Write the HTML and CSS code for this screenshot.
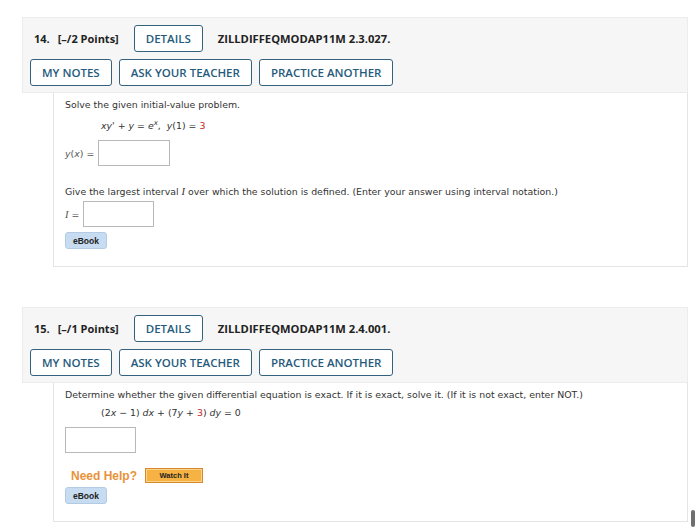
FILE: index.html
```html
<!DOCTYPE html>
<html lang="en">
<head>
    <meta charset="UTF-8">
    <title>Assignment Questions</title>
    <link rel="stylesheet" href="styles.css">
</head>
<body>
    <div class="page">
        <!-- Question 14 -->
        <div class="question">
            <div class="q-header">
                <div class="q-title">
                    <span class="q-num">14.</span>
                    <span class="q-points">[&ndash;/2 Points]</span>
                    <button class="btn">DETAILS</button>
                    <span class="q-code">ZILLDIFFEQMODAP11M 2.3.027.</span>
                </div>
                <div class="q-actions">
                    <button class="btn">MY NOTES</button>
                    <button class="btn">ASK YOUR TEACHER</button>
                    <button class="btn">PRACTICE ANOTHER</button>
                </div>
            </div>
            <div class="q-body q-body-14">
                <p class="text">Solve the given initial-value problem.</p>
                <p class="eq"><i>xy</i>' + <i>y</i> = <i>e</i><sup><i>x</i></sup>,&nbsp; <i>y</i>(1) = <span class="red">3</span></p>
                <div class="answer-row">
                    <span class="label"><i>y</i>(<i>x</i>) =</span>
                    <span class="answer-box"></span>
                </div>
                <p class="text text-gap">Give the largest interval <i class="serif">I</i> over which the solution is defined. (Enter your answer using interval notation.)</p>
                <div class="answer-row answer-row-small">
                    <span class="label"><i class="serif">I</i> =</span>
                    <span class="answer-box"></span>
                </div>
                <button class="ebook">eBook</button>
            </div>
        </div>

        <!-- Question 15 -->
        <div class="question">
            <div class="q-header">
                <div class="q-title">
                    <span class="q-num">15.</span>
                    <span class="q-points">[&ndash;/1 Points]</span>
                    <button class="btn">DETAILS</button>
                    <span class="q-code">ZILLDIFFEQMODAP11M 2.4.001.</span>
                </div>
                <div class="q-actions">
                    <button class="btn">MY NOTES</button>
                    <button class="btn">ASK YOUR TEACHER</button>
                    <button class="btn">PRACTICE ANOTHER</button>
                </div>
            </div>
            <div class="q-body q-body-15">
                <p class="text">Determine whether the given differential equation is exact. If it is exact, solve it. (If it is not exact, enter NOT.)</p>
                <p class="eq eq-15">(2<i>x</i> &minus; 1) <i>dx</i> + (7<i>y</i> + <span class="red">3</span>) <i>dy</i> = 0</p>
                <span class="answer-box answer-wide"></span>
                <div class="help">
                    <span class="help-label">Need Help?</span>
                    <button class="watch">Watch It</button>
                </div>
                <button class="ebook">eBook</button>
            </div>
        </div>
    </div>
    <div class="scroll-thumb"></div>
</body>
</html>
```

FILE: styles.css
```css
/* General Styles */
body {
    margin: 0;
    padding: 0;
    background-color: #ffffff;
    font-family: "Open Sans", Arial, sans-serif;
    color: #333333;
}

.page {
    padding: 17px 12px 0 22px;
    display: flex;
    flex-direction: column;
    gap: 40px;
}

/* Header panel */
.q-header {
    width: 666px;
    box-sizing: border-box;
    background-color: #f6f6f6;
    border: 1px solid #ececec;
    padding: 7px 7px 6px 7px;
    display: flex;
    flex-direction: column;
    gap: 7px;
}

.q-title {
    display: flex;
    align-items: center;
    padding-left: 4px;
    font-size: 11px;
    font-weight: 700;
    color: #222222;
}

.q-num {
    margin-right: 8px;
}

.q-points {
    margin-right: 15px;
}

.q-code {
    margin-left: 15px;
    font-size: 11.2px;
}

.q-actions {
    display: flex;
    gap: 7px;
}

.btn {
    font-family: "Open Sans", Arial, sans-serif;
    font-size: 11.5px;
    font-weight: 600;
    color: #255a7c;
    background-color: #ffffff;
    border: 1.5px solid #33627f;
    border-radius: 3px;
    height: 27px;
    padding: 0 11px;
    cursor: pointer;
}

/* Question body */
.q-body {
    margin-left: 31px;
    width: 635px;
    box-sizing: border-box;
    border: 1px solid #e4e4e4;
    border-top: none;
    padding: 4px 11px 0 11px;
    font-family: "DejaVu Sans", Verdana, sans-serif;
    font-size: 9.4px;
    color: #333333;
}

.q-body-14 {
    height: 174px;
}

.q-body-15 {
    height: 139px;
}

.text {
    margin: 0;
    line-height: 16px;
}

.text-gap {
    margin-top: 18px;
}

.eq {
    margin: 6px 0 0 36px;
    line-height: 14px;
}

.eq sup {
    font-size: 7px;
    vertical-align: 4px;
    line-height: 0;
}

.eq-15 {
    margin-top: 3px;
}

.red {
    color: #c62828;
}

.serif {
    font-family: "Liberation Serif", serif;
    font-size: 10.5px;
}

.answer-row {
    display: flex;
    align-items: center;
    margin-top: 7px;
    gap: 4px;
}

.answer-row-small {
    margin-top: 1px;
}

.answer-row-small .answer-box {
    width: 71px;
}

.label {
    color: #555555;
}

.answer-box {
    display: block;
    width: 72px;
    height: 26px;
    box-sizing: border-box;
    border: 1px solid #b8b8b8;
    background-color: #ffffff;
}

.answer-wide {
    width: 71px;
    margin-top: 7px;
}

.ebook {
    display: block;
    margin-top: 5px;
    font-family: Arial, "Liberation Sans", sans-serif;
    font-size: 8.5px;
    font-weight: 700;
    color: #222222;
    background-color: #c7dcf1;
    border: 1px solid #b3cbe3;
    border-radius: 3px;
    width: 42px;
    height: 17px;
    padding: 0;
}

/* Need help */
.help {
    display: flex;
    align-items: center;
    margin-top: 15px;
    padding-left: 6px;
    gap: 8px;
}

.help-label {
    font-family: Arial, "Liberation Sans", sans-serif;
    font-size: 12px;
    font-weight: 700;
    color: #e8923a;
}

.watch {
    font-family: Arial, "Liberation Sans", sans-serif;
    font-size: 7.5px;
    font-weight: 700;
    color: #222222;
    background-color: #f7b244;
    border: 1px solid #d88a2a;
    box-shadow: inset 0 0 0 1px #fbd28a;
    width: 58px;
    height: 15px;
    padding: 0;
}

.help + .ebook {
    margin-top: 4px;
}

/* Scrollbar thumb overlay */
.scroll-thumb {
    position: fixed;
    right: 5px;
    bottom: 0;
    width: 4px;
    height: 17px;
    border-radius: 2px;
    background-color: #6f6f6f;
}
```
